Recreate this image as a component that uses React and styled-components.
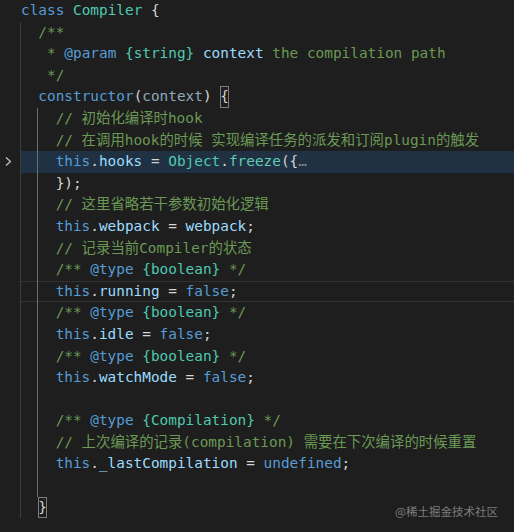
import styled, { createGlobalStyle } from 'styled-components'

const GlobalStyle = createGlobalStyle`
  html, body {
    margin: 0;
    padding: 0;
    background: #1e1e1e;
  }
`

const C = {
    plain: '#d4d4d4',
    kw: '#569cd6',
    type: '#4ec9b0',
    variable: '#9cdcfe',
    param: '#8fa9bd',
    fn: '#5fcbb4',
    comment: '#6a9955',
    dim: '#8b8b8b',
}

const Editor = styled.div`
    position: relative;
    width: 514px;
    height: 532px;
    overflow: hidden;
    background: #1e1e1e;
    font-family: "DejaVu Sans Mono", "Noto Sans CJK SC", monospace;
    font-size: 14.4px;
    line-height: 21.6px;
    color: ${C.plain};
    white-space: pre;
`

const Line = styled.div`
    display: flex;
    height: 21.6px;
`

const Gutter = styled.div`
    width: 21px;
    flex-shrink: 0;
    display: flex;
    align-items: center;
    justify-content: center;
    padding-right: 4px;
    box-sizing: border-box;
`

const Code = styled.div`
    flex: 1;
    display: flex;
    margin-left: -1px;
    padding-left: 1px;
    background: ${p => (p.$folded ? '#1f3142' : 'transparent')};
    box-shadow: ${p => (p.$current ? 'inset 0 1px #323232, inset 0 -1px #323232' : 'none')};
`

const Guide = styled.span`
    display: inline-block;
    width: 2ch;
    height: 21.6px;
    box-sizing: border-box;
    border-left: 1px solid ${p => (p.$active ? '#6e6e6e' : '#3c3c3c')};
    margin-left: -1px;
    margin-right: 1px;
`

const Tok = styled.span`
    color: ${p => p.$c};
`

const Bracket = styled.span`
    display: inline-block;
    height: 21.6px;
    box-shadow: inset 0 0 0 1px #7c7c7c;
    color: ${C.plain};
`

const Watermark = styled.div`
    position: absolute;
    right: 16px;
    bottom: 14px;
    font-family: "Noto Sans CJK SC", "Noto Sans", sans-serif;
    font-size: 11.5px;
    line-height: 14px;
    color: #7d7d7d;
    white-space: nowrap;
`

const Chevron = () => (
    <svg width="9" height="11" viewBox="0 0 9 11">
        <polyline points="2,1.5 6.5,5.5 2,9.5" fill="none" stroke="#c5c5c5" strokeWidth="1.2" />
    </svg>
)

const P = t => [C.plain, t]
const K = t => [C.kw, t]
const T = t => [C.type, t]
const V = t => [C.variable, t]
const M = t => [C.comment, t]

const jsType = type => [M('/** '), K('@type'), P(' '), T(`{${type}}`), M(' */')]
const assign = (name, value, valueColor) => [K('this'), P('.'), V(name), P(' = '), [valueColor, value], P(';')]

// indent: how many indent levels; guides: [level1Active, level2Active]
const lines = [
    { indent: 0, tokens: [K('class'), P(' '), T('Compiler'), P(' {')] },
    { indent: 1, tokens: [M('/**')] },
    { indent: 1, tokens: [M(' * '), K('@param'), P(' '), T('{string}'), P(' '), V('context'), M(' the compilation path')] },
    { indent: 1, tokens: [M(' */')] },
    { indent: 1, tokens: [K('constructor'), P('('), [C.param, 'context'], P(') ')], bracket: '{' },
    { indent: 2, tokens: [M('// 初始化编译时hook')] },
    { indent: 2, tokens: [M('// 在调用hook的时候 实现编译任务的派发和订阅plugin的触发')] },
    { indent: 2, folded: true, tokens: [K('this'), P('.'), V('hooks'), P(' = '), T('Object'), P('.'), [C.fn, 'freeze'], P('({'), [C.dim, '…']] },
    { indent: 2, tokens: [P('});')] },
    { indent: 2, tokens: [M('// 这里省略若干参数初始化逻辑')] },
    { indent: 2, tokens: assign('webpack', 'webpack', C.variable) },
    { indent: 2, tokens: [M('// 记录当前Compiler的状态')] },
    { indent: 2, tokens: jsType('boolean') },
    { indent: 2, current: true, tokens: assign('running', 'false', C.kw) },
    { indent: 2, tokens: jsType('boolean') },
    { indent: 2, tokens: assign('idle', 'false', C.kw) },
    { indent: 2, tokens: jsType('boolean') },
    { indent: 2, tokens: assign('watchMode', 'false', C.kw) },
    { indent: 2, tokens: [] },
    { indent: 2, tokens: jsType('Compilation') },
    { indent: 2, tokens: [M('// 上次编译的记录(compilation) 需要在下次编译的时候重置')] },
    { indent: 2, tokens: assign('_lastCompilation', 'undefined', C.kw) },
    { indent: 2, tokens: [] },
    { indent: 1, tokens: [], bracket: '}' },
]

const App = () => {
    return (
        <>
            <GlobalStyle />
            <Editor>
                {lines.map((line, i) => (
                    <Line key={i}>
                        <Gutter>{line.folded && <Chevron />}</Gutter>
                        <Code $folded={line.folded} $current={line.current}>
                            {Array.from({ length: line.indent }).map((_, g) => (
                                <Guide key={g} $active={g === 1} />
                            ))}
                            {line.tokens.map(([color, text], j) => (
                                <Tok key={j} $c={color}>{text}</Tok>
                            ))}
                            {line.bracket && <Bracket>{line.bracket}</Bracket>}
                        </Code>
                    </Line>
                ))}
                <Watermark>@稀土掘金技术社区</Watermark>
            </Editor>
        </>
    )
}

export default App
